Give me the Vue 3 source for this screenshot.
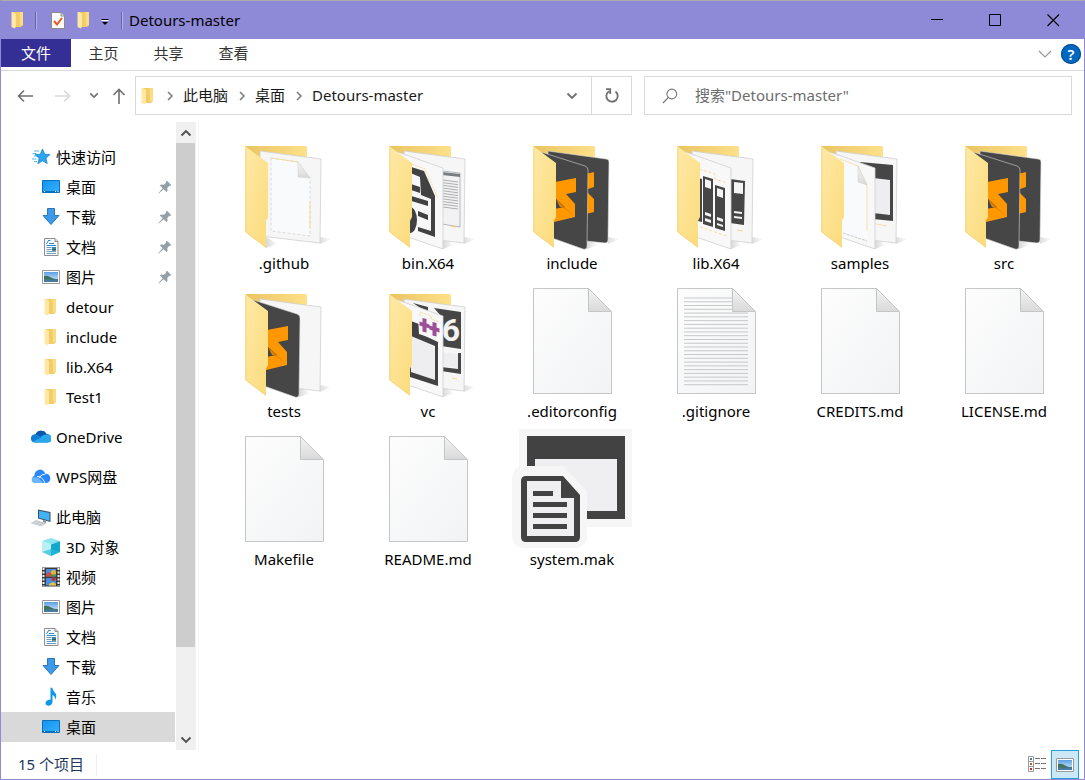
<script setup>
const navGroups = [
  {
    head: { label: '快速访问', icon: 'star' },
    items: [
      { label: '桌面', icon: 'desktop', pinned: true },
      { label: '下载', icon: 'download', pinned: true },
      { label: '文档', icon: 'document', pinned: true },
      { label: '图片', icon: 'picture', pinned: true },
      { label: 'detour', icon: 'folder' },
      { label: 'include', icon: 'folder' },
      { label: 'lib.X64', icon: 'folder' },
      { label: 'Test1', icon: 'folder' },
    ],
  },
  { head: { label: 'OneDrive', icon: 'onedrive' }, items: [] },
  { head: { label: 'WPS网盘', icon: 'wps' }, items: [] },
  {
    head: { label: '此电脑', icon: 'pc' },
    items: [
      { label: '3D 对象', icon: 'cube' },
      { label: '视频', icon: 'video' },
      { label: '图片', icon: 'picture' },
      { label: '文档', icon: 'document' },
      { label: '下载', icon: 'download' },
      { label: '音乐', icon: 'music' },
      { label: '桌面', icon: 'desktop', selected: true },
    ],
  },
]

const files = [
  { name: '.github', kind: 'folder', back: 'sheet' },
  { name: 'bin.X64', kind: 'folder', back: 'textwin', front: 'config' },
  { name: 'include', kind: 'folder', back: 'sublime', front: 'sublime' },
  { name: 'lib.X64', kind: 'folder', back: 'books', front: 'books' },
  { name: 'samples', kind: 'folder', back: 'window', front: 'sheet' },
  { name: 'src', kind: 'folder', back: 'sublime', front: 'sublime' },
  { name: 'tests', kind: 'folder', back: 'plain', front: 'sublime' },
  { name: 'vc', kind: 'folder', back: 'six', front: 'plus' },
  { name: '.editorconfig', kind: 'file' },
  { name: '.gitignore', kind: 'text' },
  { name: 'CREDITS.md', kind: 'file' },
  { name: 'LICENSE.md', kind: 'file' },
  { name: 'Makefile', kind: 'file' },
  { name: 'README.md', kind: 'file' },
  { name: 'system.mak', kind: 'mak' },
]

const tabs = ['主页', '共享', '查看']
const crumbs = ['此电脑', '桌面', 'Detours-master']
const textLines = Array.from({ length: 24 }, (_, i) => 18 + i * 3.77)
const pageLines = Array.from({ length: 11 }, (_, i) => 48 + i * 2.7)
</script>

<template>
  <div class="window">
    <svg class="defs" aria-hidden="true">
      <defs>
        <linearGradient id="flap" x1="0" y1="0" x2="1" y2="1">
          <stop offset="0" stop-color="#ffe9a6" />
          <stop offset="1" stop-color="#fbdb7c" />
        </linearGradient>
        <linearGradient id="lid" x1="0" y1="0" x2="1" y2="0">
          <stop offset="0" stop-color="#e9c461" />
          <stop offset="1" stop-color="#ffe18a" />
        </linearGradient>
        <linearGradient id="paper" x1="0" y1="0" x2="1" y2="1">
          <stop offset="0" stop-color="#fdfdfd" />
          <stop offset="1" stop-color="#f2f3f5" />
        </linearGradient>
        <linearGradient id="curl" x1="0" y1="0" x2="0" y2="1">
          <stop offset="0" stop-color="#f4f4f4" />
          <stop offset="1" stop-color="#d9d9d9" />
        </linearGradient>
        <linearGradient id="shade" x1="0" y1="0" x2="1" y2="0">
          <stop offset="0" stop-color="#cfcfcf" />
          <stop offset="1" stop-color="#ffffff" />
        </linearGradient>
        <linearGradient id="screen" x1="0" y1="0" x2="1" y2="1">
          <stop offset="0" stop-color="#1593ee" />
          <stop offset="1" stop-color="#35b0ff" />
        </linearGradient>
        <linearGradient id="sky" x1="0" y1="0" x2="0" y2="1">
          <stop offset="0" stop-color="#5b9fe4" />
          <stop offset="1" stop-color="#e2f2fb" />
        </linearGradient>
      </defs>
      <symbol id="i-folder" viewBox="0 0 20 20">
        <path d="M5 2h10v13.500h-1.500V17H5z" fill="#f3cc68" />
        <path d="M11.500 2H15v13.500h-3z" fill="#fadc84" />
        <path d="M3.500 2H5l3 2v12l-1 2.500-3.500-1.500z" fill="#ffe8a4" />
      </symbol>
      <symbol id="i-star" viewBox="0 0 20 20">
        <path d="M11.500 2l2.200 5.200 5.300.3-4 3.700 1.200 5.300-4.600-2.700-4.700 2.900 1.300-5.400-4.200-3.600 5.300-.4z" fill="#2aa5ee" stroke="#1787cf" stroke-width=".8" />
        <path d="M3 4h5M1.500 6.500h4M3 9h3M1 12h4M3 14.500h3" stroke="#55b9f1" stroke-width="1" />
      </symbol>
      <symbol id="i-desktop" viewBox="0 0 20 20">
        <path d="M1.500 3.500h17v12h-17z" fill="url(#screen)" stroke="#0870bd" />
        <path d="M2 14.500h16" stroke="#0870bd" />
        <path d="M3 14.500h1M14 14.500h1M16.500 14.500h1" stroke="#fff" />
      </symbol>
      <symbol id="i-download" viewBox="0 0 20 20">
        <path d="M6.500 1.500h7v7h4.500L10 17.500 2 8.500h4.500z" fill="#3c9ae8" stroke="#2c78bd" />
      </symbol>
      <symbol id="i-document" viewBox="0 0 20 20">
        <path d="M3.500 1.500h10.500l3 3v14H3.500z" fill="#fafafa" stroke="#8e8e8e" />
        <path d="M14 1.500v3h3" fill="#ddd" stroke="#8e8e8e" />
        <path d="M7.500 3.500l-2 3.500M7 3.500h2.500M8 6.500h5M5.500 8.500h9.500" stroke="#2a8ed0" fill="none" />
        <path d="M5.500 10.500h5M5.500 12.500h5M5.500 14.500h9.500M5.500 16.500h9.500" stroke="#6b9fc4" />
        <path d="M11 10h4v3.500h-4z" fill="#3a82b5" />
        <path d="M11 12h4v1.500h-4z" fill="#32664b" />
      </symbol>
      <symbol id="i-picture" viewBox="0 0 20 20">
        <path d="M1.500 3.500h17v13h-17z" fill="#fff" stroke="#999" />
        <path d="M3 5h14v10H3z" fill="url(#sky)" />
        <path d="M3 9q4-1 7 1.500 4 2 7 1.500v1H3z" fill="#3f725c" />
        <path d="M3 12.500h14V15H3z" fill="#4a79a1" />
      </symbol>
      <symbol id="i-onedrive" viewBox="0 0 20 20">
        <path d="M4 15.500a4 4 0 0 1 .5-8A6 6 0 0 1 15.500 7a4.300 4.300 0 0 1 1 8.500z" fill="#0a6cca" />
        <path d="M4.500 7.500A6 6 0 0 1 15.500 7q-3 .5-5.500 3z" fill="#0b57a9" />
        <path d="M2 14.500q3-2 7-4 3-3.500 7.500-3a4 4 0 0 1 .5 8H4q-1.500 0-2-1z" fill="#28a8ea" />
        <path d="M0 11.500a4 4 0 0 1 4.500-4Q8 8 10.500 10.500L1.500 14.500Q0 13.500 0 11.500z" fill="#117fd8" />
      </symbol>
      <symbol id="i-wps" viewBox="0 0 20 20">
        <path d="M4 16a4 4 0 0 1-.5-7.500 5.500 5.500 0 0 1 10.800-1.800A4.700 4.700 0 0 1 15.500 16z" fill="#2a86fb" />
        <path d="M.5 12.500q3-4 7-1.500l5 5H4q-3 0-3.500-3.500z" fill="#69b6ff" />
        <path d="M6 9.500q4.500-1 8 6.500M8 11q2-4 6.500-4" fill="none" stroke="#fff" stroke-width=".9" />
      </symbol>
      <symbol id="i-pc" viewBox="0 0 20 20">
        <path d="M7 2.500l12.500 2.500v10L7 11.500z" fill="#3c5161" />
        <path d="M8 3.700l10.500 2.200v7.800L8 10.700z" fill="#42b2f7" />
        <path d="M12 13l3 1v2l-3-1z" fill="#7b8790" />
        <path d="M5 13.500l9.500 3-4.500 2.500-9.500-3z" fill="#dfe4e8" stroke="#a9b2b8" stroke-width=".6" />
        <path d="M3 15.500l8 2.500M5 14.500l8 2.500" stroke="#a9b2b8" stroke-width=".6" />
      </symbol>
      <symbol id="i-cube" viewBox="0 0 20 20">
        <path d="M10 1l9 3-9 3.500L1 4z" fill="#8ce5ee" />
        <path d="M1 4l9 3.500V19l-9-4z" fill="#baf0f5" />
        <path d="M19 4l-9 3.500V19l9-4z" fill="#13a9cc" />
        <path d="M10 12l9 3-9 4-9-4z" fill="#26b9d9" opacity=".65" />
      </symbol>
      <symbol id="i-video" viewBox="0 0 20 20">
        <path d="M1 .5h18v19H1z" fill="#3b3b3b" />
        <path d="M5 2h10v7.500H5zM5 11h10v7.500H5z" fill="#4d8ddd" />
        <path d="M2.500 1v18M17.500 1v18" stroke="#f4f4f4" stroke-width="2" stroke-dasharray="2 1.500" />
        <path d="M5 8q2.500-5 5.500-1v2.500H5z" fill="#dc453d" />
        <circle cx="12.500" cy="5.500" r="2.500" fill="#e9b72e" />
        <path d="M9.500 7.500h5v2h-5z" fill="#4f973a" />
        <circle cx="12.500" cy="12" r="2" fill="#bd3028" />
        <path d="M8 17l4-2 3 2v1.500H8z" fill="#e9c33a" />
      </symbol>
      <symbol id="i-music" viewBox="0 0 20 20">
        <path d="M9.500.8h1.800q.3 3 2.500 4.700 3 3 .2 7.500.5-4-2.500-5v6.500q0 3.500-3.700 4.200-3.300 0-3.300-2.700 0-3 5-3.500z" fill="#0d97e8" />
      </symbol>
      <symbol id="i-pin" viewBox="0 0 14 14">
        <path d="M9 .8L13.200 5l-1 1-.9-.2-2 2.200.2 3-1 1L5.700 9.200.8 13.600l-.5-.4L4.700 8.200 1.900 5.500l1-1 3 .2 2.200-2L7.900 1.800z" fill="#949fa8" />
      </symbol>
      <symbol id="i-down" viewBox="0 0 12 8">
        <path d="M1.500 1.500L6 6l4.500-4.500" fill="none" stroke="currentColor" stroke-width="1.900" />
      </symbol>
      <symbol id="i-crumb" viewBox="0 0 8 10">
        <path d="M2 1l4 4-4 4" fill="none" stroke="#7a7a7a" stroke-width="1.500" />
      </symbol>
    </svg>

    <header class="titlebar">
      <svg class="ico20"><use href="#i-folder" /></svg>
      <span class="tsep"></span>
      <button class="qa" aria-label="属性">
        <svg width="16" height="20" viewBox="0 0 16 20">
          <path d="M1.500 2.500h9.500l3.500 3.500v12.500h-13z" fill="#fbfbfb" stroke="#8a8a8a" />
          <path d="M11 2.500v3.500h3.500" fill="#ddd" stroke="#8a8a8a" />
          <path d="M4 11l3 3.500 5-6.500" fill="none" stroke="#e8591c" stroke-width="2" />
        </svg>
      </button>
      <button class="qa qa-folder" aria-label="新建文件夹"><svg class="ico20"><use href="#i-folder" /></svg></button>
      <button class="qa qa-more" aria-label="自定义快速访问工具栏">
        <svg width="8" height="8" viewBox="0 0 8 8"><path d="M.5 1.500h7" stroke="#000" /><path d="M1 4h6L4 7z" /><path d="M.5 2.500h7" stroke="#fff" /></svg>
      </button>
      <span class="tsep"></span>
      <h1>Detours-master</h1>
      <div class="wincontrols">
        <button aria-label="最小化"><svg width="13" height="13" viewBox="0 0 13 13"><path d="M0 5.500h12" stroke="#000" /></svg></button>
        <button aria-label="最大化"><svg width="13" height="13" viewBox="0 0 13 13"><path d="M.5.500h11v11H.5z" fill="none" stroke="#000" /></svg></button>
        <button aria-label="关闭"><svg width="13" height="13" viewBox="0 0 13 13"><path d="M.5.500l11.500 11.500M12 .5L.5 12" fill="none" stroke="#000" stroke-width="1.100" /></svg></button>
      </div>
    </header>

    <nav class="ribbon" aria-label="功能区">
      <button class="tab file">文件</button>
      <button v-for="t in tabs" :key="t" class="tab">{{ t }}</button>
      <button class="expand" aria-label="展开功能区">
        <svg width="14" height="8" viewBox="0 0 14 8"><path d="M1 1l6 6 6-6" fill="none" stroke="#999" stroke-width="1.200" /></svg>
      </button>
      <button class="help" aria-label="帮助">?</button>
    </nav>

    <div class="toolbar">
      <div class="history">
        <button aria-label="返回" class="b-back"><svg width="16" height="14" viewBox="0 0 16 14"><path d="M7 1.500L1.500 7 7 12.500M1.500 7H16" fill="none" stroke="#707070" stroke-width="1.600" /></svg></button>
        <button aria-label="前进" class="b-fwd"><svg width="16" height="14" viewBox="0 0 16 14"><path d="M9 1.500l5.500 5.500L9 12.500M14.500 7H0" fill="none" stroke="#dadada" stroke-width="1.600" /></svg></button>
        <button aria-label="最近位置" class="b-rec"><svg width="10" height="7"><use href="#i-down" /></svg></button>
        <button aria-label="上移" class="b-up"><svg width="14" height="16" viewBox="0 0 14 16"><path d="M1.500 7L7 1.500 12.500 7M7 1.500V16" fill="none" stroke="#707070" stroke-width="1.600" /></svg></button>
      </div>
      <div class="address">
        <svg class="ico20 addr-folder"><use href="#i-folder" /></svg>
        <template v-for="c in crumbs" :key="c">
          <svg class="crumb-arrow" width="8" height="10"><use href="#i-crumb" /></svg>
          <a href="#" class="crumb">{{ c }}</a>
        </template>
        <button class="addr-drop" aria-label="以前的位置"><svg width="12" height="8"><use href="#i-down" /></svg></button>
        <button class="refresh" aria-label="刷新">
          <svg width="16" height="16" viewBox="0 0 16 16"><path d="M5 3.200A5.700 5.700 0 1 0 11.500 3.500M2 1.200h4.200V6" fill="none" stroke="#707070" stroke-width="1.800" /></svg>
        </button>
      </div>
      <label class="search">
        <svg width="16" height="16" viewBox="0 0 16 16"><circle cx="9.800" cy="6" r="4.900" fill="none" stroke="#777" stroke-width="1.100" /><path d="M6.200 9.600L1 15" stroke="#777" stroke-width="1.200" /></svg>
        <input type="text" placeholder="搜索&quot;Detours-master&quot;" aria-label="搜索" />
      </label>
    </div>

    <div class="body">
      <nav class="side" aria-label="导航窗格">
        <ul v-for="g in navGroups" :key="g.head.label" class="group">
          <li>
            <a href="#" class="nav head">
              <svg class="ico20"><use :href="'#i-' + g.head.icon" /></svg>
              <span>{{ g.head.label }}</span>
            </a>
          </li>
          <li v-for="i in g.items" :key="i.label">
            <a href="#" class="nav child" :class="{ selected: i.selected }">
              <svg class="ico20"><use :href="'#i-' + i.icon" /></svg>
              <span>{{ i.label }}</span>
              <svg v-if="i.pinned" class="pin"><use href="#i-pin" /></svg>
            </a>
          </li>
        </ul>
      </nav>
      <div class="scroll">
        <button class="sbtn up" aria-label="向上滚动"><svg width="12" height="8"><use href="#i-down" /></svg></button>
        <div class="track"><div class="thumb"></div></div>
        <button class="sbtn" aria-label="向下滚动"><svg width="12" height="8"><use href="#i-down" /></svg></button>
      </div>

      <main class="files">
        <button v-for="f in files" :key="f.name" class="item">
          <svg class="art" viewBox="0 0 120 120" aria-hidden="true">
            <g v-if="f.kind === 'folder'">
              <path d="M96 112l12-5-12-2z" fill="url(#shade)" opacity=".7" />
              <path v-if="f.front" d="M75 117l11-4-11-8z" fill="url(#shade)" opacity=".8" />
              <path v-else d="M42 116l12-4-12-7z" fill="url(#shade)" opacity=".8" />
              <path d="M21 14h61l1 1v40H40z" fill="url(#lid)" />

              <g v-if="f.back === 'sublime'">
                <path d="M36 19l58 8q3 0 3 3l-1 78q0 3-3 3l-57-6z" fill="#464646" stroke="#dcdcdc" stroke-width=".6" />
                <path d="M74 42l8-2v15l-6 2-2-1zM74 61l2 0 6 6v13l-8 2z" fill="#ff9800" />
              </g>
              <path v-else d="M36 19l61 8-1 84-60-7z" fill="#f6f6f6" stroke="#cfcfcf" stroke-width=".8" />

              <g v-if="f.back === 'sheet'">
                <path d="M47 26l27 4 12 16v58l-39-5z" fill="#f9fafb" stroke="#d3d3d3" stroke-width=".8" stroke-dasharray="3 2" />
                <path d="M47 26l27 4M86 69v27" stroke="#f4d890" stroke-width=".8" />
                <path d="M74 30l12 16-12-1z" fill="url(#curl)" stroke="#ccc" stroke-width=".5" />
              </g>
              <g v-if="f.back === 'textwin'">
                <path d="M74 39l18 2v54l-18-3z" fill="#f2f2f4" stroke="#a5a9ac" stroke-width=".8" />
                <path d="M74 40l18 2v3l-18-2z" fill="#777d80" />
                <path v-for="y in pageLines" :key="y" :d="`M75 ${y}l15 2`" stroke="#a7a7a7" stroke-width=".9" />
                <path d="M83 94l5 1" stroke="#f2c963" />
              </g>
              <g v-if="f.back === 'books'">
                <path d="M74 47l15 2-1 44-14-2z" fill="#464646" />
                <path d="M78 50l9 1v11l-9-1zM78 79l8 1v2l-8-1zM78 84l8 1v2l-8-1z" fill="#f4f4f4" />
                <path d="M81 98l6 1" stroke="#f5d98d" />
              </g>
              <g v-if="f.back === 'window'">
                <path d="M60 30l33 3v56l-20-2z" fill="#464646" />
                <path d="M73 46l17 2v35l-17-2z" fill="#eeeef1" />
                <path d="M76 92l11 2" stroke="#f5d98d" stroke-width=".7" />
              </g>
              <g v-if="f.back === 'six'">
                <path d="M45 23l15 4v6zM66 28l27 4v37l-20-3V36z" fill="#464646" />
                <path d="M90 73h3v21l-20-3v-4l17 2z" fill="#464646" />
                <path d="M74 72l16 2v14l-16-2z" fill="#eeeef1" />
                <text x="83" y="61" class="six">6</text>
                <path d="M84 98l5 1" stroke="#f5d98d" />
              </g>

              <g v-if="f.front === 'sublime'">
                <path d="M29 20l44 14q3 1 3 4l-1 76q0 4-4 3l-31-11z" fill="#464646" stroke="#d6d6d6" stroke-width=".6" />
                <path d="M43 50l21-4v14l-10 2 9 10v13l-21 5V77l11-2-10-9z" fill="#ff9800" />
                <path d="M44 67l19 18-11-9-4-1z" fill="#dc8100" />
              </g>
              <path v-else-if="f.front" d="M27 19l48 17v81l-35-12z" fill="#f8f8f8" stroke="#cfcfcf" stroke-width=".8" />

              <g v-if="f.front === 'config'">
                <path d="M40 34l16 5 11 25v41l-17-6v-4l13 4V67l-10-4-1-18-12-5z" fill="#424242" />
                <path d="M40 51l12 4v6l-12-4zM40 63l20 6v5l-20-6zM50 79l10 4v5l-10-4z" fill="#424242" />
                <ellipse cx="42" cy="88" rx="7" ry="13" fill="#424242" />
                <path d="M44 32l13 5 13 29" fill="none" stroke="#f4d586" stroke-width=".8" stroke-dasharray="2 1" />
              </g>
              <g v-if="f.front === 'books'">
                <path d="M42 46l4 1v43l-4-1zM47 44l10 3v48l-10-3zM59 53l10 3v43l-10-3z" fill="#464646" />
                <path d="M49 47l6 2v8l-6-2zM61 56l6 2v8l-6-2zM49 80l6 2v3l-6-2zM49 86l6 2v3l-6-2zM61 85l6 2v3l-6-2zM61 91l6 2v2l-6-2z" fill="#f4f4f4" />
                <path d="M43 37l16 5v5l12 4M44 95l27 9" fill="none" stroke="#f5d98d" stroke-width=".8" stroke-dasharray="3 2" />
              </g>
              <g v-if="f.front === 'sheet'">
                <path d="M40 28l18 6 9 19v55l-26-8z" fill="#f9fafb" />
                <path d="M40 27l18 7 9 19v46" fill="none" stroke="#f1dca2" stroke-width=".8" />
                <path d="M43 101l24 8" stroke="#bbb" stroke-width=".7" stroke-dasharray="3 1" />
                <path d="M58 34l9 19-9-3z" fill="url(#curl)" stroke="#ccc" stroke-width=".5" />
              </g>
              <g v-if="f.front === 'plus'">
                <path d="M40 40l11 4v9l19 9v44l-28-9z" fill="#424242" />
                <path d="M43 56l24 10v34l-24-8z" fill="#eeeef1" />
                <path d="M50 35l20 4v20l-7-1-12-4z" fill="#f6f6f6" />
                <path d="M54.500 38l4 1v4.500l3 1v4l-3-1v5l-4-1v-5l-3-1v-4l3 1zM64.500 42l4 1v4.500l3 1v4l-3-1v5l-4-1v-5l-3-1v-4l3 1z" fill="#9b4f96" />
                <path d="M52 36v-4l11 4v3l8 3" fill="none" stroke="#f5d98d" stroke-width=".8" stroke-dasharray="3 1" />
              </g>

              <path d="M21 14l23 17v54l-2 4v27L21 100z" fill="url(#flap)" />
              <path d="M22 16v84l20 15" fill="none" stroke="#f5cf6e" stroke-width=".6" />
            </g>

            <g v-else-if="f.kind === 'mak'">
              <path d="M7 1h113v98H7z" fill="#f6f6f6" />
              <path d="M15 8h98v83H15z" fill="#424242" />
              <path d="M23 31h82v52H23z" fill="#efeff2" />
              <path d="M14 38h37l24 25v44q0 13-14 13H14q-14 0-14-13V52q0-14 14-14z" fill="#f6f6f6" />
              <path d="M14 48h37l17 19v42q0 5-5 5H14q-5 0-5-5V53q0-5 5-5z" fill="#424242" />
              <path d="M15 53h34v17h13v38H15z" fill="#efeff2" />
              <path d="M21 63h20v5H21zM21 74h34v5H21zM21 85h34v5H21zM21 96h34v5H21z" fill="#424242" />
            </g>

            <g v-else>
              <path d="M21.500 8.500h55l23 24v81h-78z" fill="url(#paper)" stroke="#c3c5c6" />
              <template v-if="f.kind === 'text'">
                <path v-for="y in textLines" :key="y" :d="`M28 ${y}h64`" stroke="#c6c8c9" />
              </template>
              <path d="M77 8l23 24h1V8z" fill="#fff" />
              <path d="M76.500 8.500v23h23z" fill="url(#curl)" stroke="#c3c5c6" />
            </g>
          </svg>
          <span class="name">{{ f.name }}</span>
        </button>
      </main>
    </div>

    <footer class="status">
      <span class="count">15 个项目</span>
      <div class="views">
        <button class="v-list" aria-label="详细信息">
          <svg width="18" height="17" viewBox="0 0 18 17">
            <path d="M.5.500h5v5h-5zM.5 5.500h5v5h-5zM.5 10.500h5v5h-5z" fill="#fff" stroke="#999" />
            <path d="M2 2h2v2H2z" fill="#4a7c9c" /><path d="M2 7h2v2H2z" fill="#a0643a" /><path d="M2 12h2v2H2z" fill="#d32a1c" />
            <path d="M7 2.500h5M13 2.500h5M7 7.500h5M13 7.500h5M7 12.500h5M13 12.500h5" stroke="#777" />
          </svg>
        </button>
        <button class="v-icons" aria-label="大缩略图"><svg class="ico20"><use href="#i-picture" /></svg></button>
      </div>
    </footer>
  </div>
</template>

<style>
body {
  margin: 0;
}
</style>

<style scoped>
.window {
  box-sizing: border-box;
  display: flex;
  flex-direction: column;
  height: 100vh;
  border: 1px solid #8f8ad7;
  border-top-color: #ababab;
  background: #fff;
  color: #000;
  font: 15px/20px "Noto Sans", "Noto Sans CJK SC", sans-serif;
}
.defs {
  position: absolute;
  width: 0;
  height: 0;
}
button {
  display: flex;
  align-items: center;
  justify-content: center;
  padding: 0;
  border: 0;
  background: none;
  color: inherit;
  font: inherit;
}
a {
  color: inherit;
  text-decoration: none;
}
svg {
  flex: none;
}
.ico20 {
  width: 20px;
  height: 20px;
}

.titlebar {
  display: flex;
  flex: none;
  align-items: center;
  height: 38px;
  padding-left: 7px;
  background: #8f8ad7;
}
.tsep {
  width: 1px;
  height: 17px;
  margin: 0 6px 0 7px;
  background: #6662a8;
  border-right: 1px solid #b5b2e6;
}
.qa {
  margin-left: 7px;
}
.qa-folder {
  margin-left: 8px;
}
.qa-more {
  margin: 3px 5px 0 7px;
}
h1 {
  margin: 0;
  font-size: 15px;
  font-weight: 400;
}
.wincontrols {
  display: flex;
  margin-left: auto;
  margin-right: 2px;
  align-self: stretch;
}
.wincontrols button {
  width: 58px;
}

.ribbon {
  display: flex;
  flex: none;
  align-items: center;
  height: 30px;
  padding-bottom: 1px;
  border-bottom: 1px solid #dadada;
}
.tab {
  align-self: flex-start;
  width: 65px;
  height: 28px;
  color: #333;
}
.file {
  width: 70px;
  background: #342f94;
  color: #fff;
}
.expand {
  margin-left: auto;
  margin-right: 9px;
}
.help {
  width: 20px;
  height: 20px;
  margin-right: 3px;
  border-radius: 50%;
  background: #0067c0;
  box-shadow: inset 0 0 0 1px #0b4d91;
  color: #fff;
  font-weight: 600;
}

.toolbar {
  display: flex;
  flex: none;
  gap: 12px;
  padding: 5px 12px 7px 0;
}
.history {
  display: flex;
  align-items: center;
  width: 122px;
  color: #707070;
}
.b-back {
  margin-left: 16px;
}
.b-fwd {
  margin-left: 22px;
}
.b-rec {
  margin-left: 18px;
}
.b-up {
  margin-left: 13px;
}
.address,
.search {
  display: flex;
  box-sizing: border-box;
  align-items: center;
  height: 39px;
  border: 1px solid #d9d9d9;
}
.address {
  flex: 495 1 0;
  color: #1a1a1a;
}
.addr-folder {
  margin-left: 2px;
}
.crumb {
  padding-bottom: 2px;
}
.crumb-arrow {
  margin: 0 9px 0 10px;
}
.addr-folder + .crumb-arrow {
  margin-left: 8px;
}
.addr-drop {
  width: 38px;
  height: 37px;
  margin-left: auto;
  color: #707070;
}
.refresh {
  width: 40px;
  height: 37px;
  border-left: 1px solid #d9d9d9;
}
.search {
  flex: 409 1 0;
  padding-left: 17px;
}
.search input {
  flex: 1;
  min-width: 0;
  margin-left: 17px;
  padding: 0 0 2px;
  border: 0;
  outline: 0;
  background: none;
  font: inherit;
}
.search input::placeholder {
  color: #6d6d6d;
  opacity: 1;
}

.body {
  display: flex;
  flex: 1;
  min-height: 0;
}
.side {
  width: 174px;
  padding-top: 20px;
  overflow: hidden;
}
.group {
  margin: 0 0 10px;
  padding: 0;
  list-style: none;
}
.nav {
  display: flex;
  align-items: center;
  height: 30px;
  gap: 5px;
  white-space: nowrap;
}
.head {
  padding-left: 30px;
}
.child {
  padding-left: 40px;
}
.selected {
  background: #d9d9d9;
}
.pin {
  width: 14px;
  height: 14px;
  margin-left: auto;
  margin-right: 3px;
}
.scroll {
  display: flex;
  flex-direction: column;
  width: 20px;
  margin-left: 1px;
  background: #f0f0f0;
  color: #505050;
}
.sbtn {
  width: 19px;
  height: 21px;
}
.up svg {
  transform: rotate(180deg);
}
.track {
  flex: 1;
}
.thumb {
  width: 19px;
  height: 86%;
  background: #cdcdcd;
}
.files {
  display: grid;
  flex: 1;
  grid-template-columns: repeat(auto-fill, 144px);
  grid-auto-rows: 144px;
  row-gap: 4px;
  margin-left: 2px;
  padding: 10px 0 0 13px;
  border-left: 1px solid #f5f5f5;
  overflow: hidden;
}
.item {
  flex-direction: column;
  justify-content: flex-start;
}
.art {
  width: 120px;
  height: 120px;
  overflow: visible;
}
.name {
  line-height: 22px;
}
.six {
  fill: #f2f2f2;
  font: 700 32px Roboto, sans-serif;
  text-anchor: middle;
}

.status {
  display: flex;
  flex: none;
  align-items: center;
  height: 29px;
  padding: 0 5px 0 17px;
  color: #1e395b;
}
.count {
  padding: 0 12px 2px 0;
  border-right: 1px solid #f0f0f0;
}
.views {
  display: flex;
  align-items: center;
  gap: 5px;
  margin-left: auto;
}
.v-icons {
  box-sizing: border-box;
  width: 28px;
  height: 29px;
  border: 1px solid #26a0da;
  background: #cce8f7;
}
</style>
